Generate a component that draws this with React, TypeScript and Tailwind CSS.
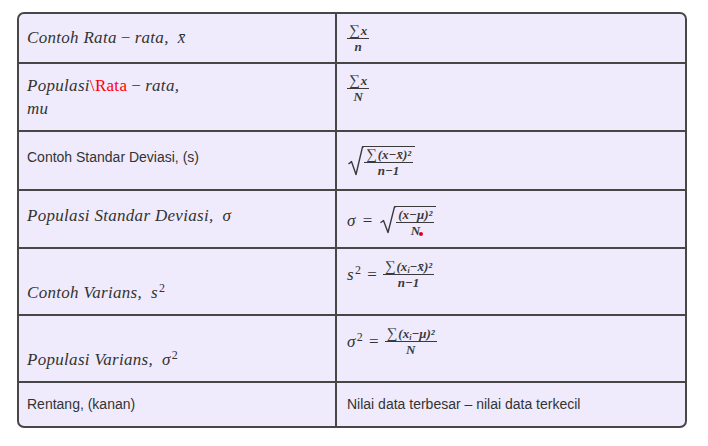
import React from "react";

const serif = "font-['Liberation_Serif','DejaVu_Serif',serif]";
const sans = "font-['Liberation_Sans',Arial,sans-serif] text-[14px] text-[#333]";

function Frac({ num, den }: { num: React.ReactNode; den: React.ReactNode }) {
  return (
    <span className={`inline-flex flex-col items-center ${serif} text-[13px] leading-[11px] font-bold italic text-[#3a3a3a]`}>
      <span className="px-[2px] pb-[2px] leading-[11px]">{num}</span>
      <span className="w-full border-t border-[#3a3a3a]" />
      <span className="pt-[2px]">{den}</span>
    </span>
  );
}

function Sqrt({ children, h = 30 }: { children: React.ReactNode; h?: number }) {
  return (
    <span className="inline-flex items-start">
      <svg width="17" height={h} viewBox={`0 0 17 ${h}`} className="shrink-0">
        <path
          d={`M1.5 ${h * 0.6} L4.5 ${h * 0.52} L9 ${h - 1.5} L15.5 0.8 L17 0.8`}
          fill="none"
          stroke="#3a3a3a"
          strokeWidth="1.4"
          strokeLinejoin="round"
        />
      </svg>
      <span className="flex border-t-[1.4px] border-[#3a3a3a] pt-[2px] pr-[2px]">{children}</span>
    </span>
  );
}

const Sum = () => <span className="not-italic font-normal text-[15px] leading-[11px] pr-[1px]">∑</span>;

function Row({
  h,
  left,
  right,
  leftAlign = "items-center",
  rightAlign = "items-center",
  last = false,
}: {
  h: string;
  left: React.ReactNode;
  right: React.ReactNode;
  leftAlign?: string;
  rightAlign?: string;
  last?: boolean;
}) {
  return (
    <div className={`flex ${h} ${last ? "" : "border-b-2 border-[#474747]"}`}>
      <div className={`w-[318px] shrink-0 border-r-2 border-[#474747] pl-[8px] flex ${leftAlign}`}>{left}</div>
      <div className={`flex-1 pl-[10px] flex ${rightAlign}`}>{right}</div>
    </div>
  );
}

const M = ({ children }: { children: React.ReactNode }) => (
  <span className={`${serif} italic text-[17px] tracking-[0.3px] text-[#333]`}>{children}</span>
);

const Minus = () => <span className="not-italic px-[4px]">−</span>;

const Sup = ({ children }: { children: React.ReactNode }) => (
  <sup className="not-italic text-[12px] pl-[1px]">{children}</sup>
);

export default function App() {
  return (
    <div className="w-[708px] h-[446px] bg-white pt-[12px] pl-[17px]">
      <div className="w-[670px] border-2 border-[#474747] rounded-[7px] bg-[#efebfc] overflow-hidden text-[#333]">
        <Row
          h="h-[50px]"
          left={
            <M>
              Contoh Rata<Minus />rata,&nbsp; x̄
            </M>
          }
          rightAlign="items-start pt-[11px]"
          right={<Frac num={<><Sum />x</>} den="n" />}
        />
        <Row
          h="h-[68px]"
          leftAlign="items-start pt-[10px]"
          left={
            <div className="leading-[22px]">
              <M>
                Populasi<span className="not-italic text-[#ff0000]">\Rata</span>
                <Minus />rata,
              </M>
              <br />
              <M>mu</M>
            </div>
          }
          rightAlign="items-start pt-[11px]"
          right={<Frac num={<><Sum />x</>} den="N" />}
        />
        <Row
          h="h-[59px]"
          leftAlign="items-start pt-[15px]"
          left={<span className={sans}>Contoh Standar Deviasi, (s)</span>}
          rightAlign="items-start pt-[14px]"
          right={
            <Sqrt>
              <Frac num={<><Sum />(x−x̄)²</>} den="n−1" />
            </Sqrt>
          }
        />
        <Row
          h="h-[58px]"
          leftAlign="items-start pt-[12px]"
          left={<M>Populasi Standar Deviasi,&nbsp; σ</M>}
          rightAlign="items-start pt-[15px]"
          right={
            <span className="inline-flex items-center">
              <M>σ</M>
              <span className={`${serif} text-[17px] px-[7px]`}>=</span>
              <Sqrt h={28}>
                <span className="relative inline-flex">
                  <Frac num="(x−μ)²" den="N" />
                  <span className="absolute left-[23px] bottom-[0px] w-[4px] h-[4px] rounded-full bg-[#e0001a]" />
                </span>
              </Sqrt>
            </span>
          }
        />
        <Row
          h="h-[67px]"
          leftAlign="items-start pt-[31px]"
          left={
            <M>
              Contoh Varians,&nbsp; s<Sup>2</Sup>
            </M>
          }
          rightAlign="items-start pt-[12px]"
          right={
            <span className="inline-flex items-center">
              <M>
                s<Sup>2</Sup>
              </M>
              <span className={`${serif} text-[17px] px-[6px]`}>=</span>
              <Frac num={<><Sum />(x<sub className="text-[8px]">i</sub>−x̄)²</>} den="n−1" />
            </span>
          }
        />
        <Row
          h="h-[67px]"
          leftAlign="items-start pt-[31px]"
          left={
            <M>
              Populasi Varians,&nbsp; σ<Sup>2</Sup>
            </M>
          }
          rightAlign="items-start pt-[12px]"
          right={
            <span className="inline-flex items-center">
              <M>
                σ<Sup>2</Sup>
              </M>
              <span className={`${serif} text-[17px] px-[6px]`}>=</span>
              <Frac num={<><Sum />(x<sub className="text-[8px]">i</sub>−μ)²</>} den="N" />
            </span>
          }
        />
        <Row
          h="h-[43px]"
          last
          left={<span className={sans}>Rentang, (kanan)</span>}
          right={<span className={sans}>Nilai data terbesar – nilai data terkecil</span>}
        />
      </div>
    </div>
  );
}
